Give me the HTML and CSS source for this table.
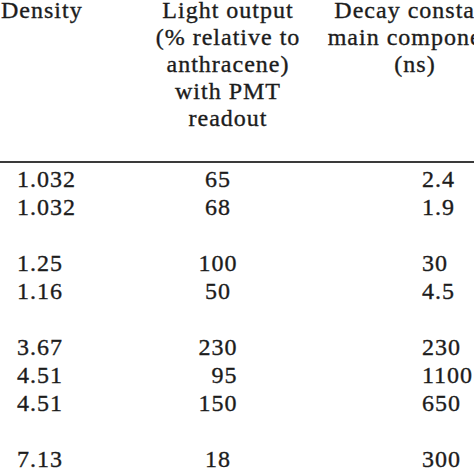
FILE: index.html
```html
<!DOCTYPE html>
<html>
<head>
<meta charset="utf-8">
<link rel="stylesheet" href="styles.css">
</head>
<body>
<div class="sheet">
  <div class="head">
    <div class="h h1">Density</div>
    <div class="h h2">Light output<br>(% relative to<br>anthracene)<br>with PMT<br>readout</div>
    <div class="h h3">Decay constant<br>main component<br>(ns)</div>
  </div>
  <div class="rule"></div>
  <div class="body">
    <div class="row"><span class="c1">1.032</span><span class="c2">65</span><span class="c3">2.4</span></div>
    <div class="row"><span class="c1">1.032</span><span class="c2">68</span><span class="c3">1.9</span></div>
    <div class="row gap"><span class="c1">1.25</span><span class="c2">100</span><span class="c3">30</span></div>
    <div class="row"><span class="c1">1.16</span><span class="c2">50</span><span class="c3">4.5</span></div>
    <div class="row gap"><span class="c1">3.67</span><span class="c2">230</span><span class="c3">230</span></div>
    <div class="row"><span class="c1">4.51</span><span class="c2">&#8199;95</span><span class="c3">1100</span></div>
    <div class="row"><span class="c1">4.51</span><span class="c2">150</span><span class="c3">650</span></div>
    <div class="row gap"><span class="c1">7.13</span><span class="c2">18</span><span class="c3">300</span></div>
  </div>
</div>
</body>
</html>
```
FILE: styles.css
```css
html, body {
  margin: 0;
  padding: 0;
  background: #ffffff;
}
body {
  width: 474px;
  height: 474px;
  overflow: hidden;
}
.sheet {
  width: 560px;
  font-family: "Liberation Serif", "Times New Roman", serif;
  font-size: 24px;
  letter-spacing: 1px;
  color: #1c1c1c;
  -webkit-text-stroke: 0.35px #1c1c1c;
  white-space: nowrap;
}
.head {
  display: grid;
  grid-template-columns: 148px 160px 214px;
  line-height: 27px;
  margin-top: -3px;
}
.h1 {
  padding-left: 1px;
}
.h2 {
  text-align: center;
}
.h3 {
  text-align: center;
}
.rule {
  margin-top: 29px;
  width: 474px;
  height: 0;
  border-top: 2px solid #3a3a3a;
}
.body {
  margin-top: 2px;
}
.row {
  display: grid;
  grid-template-columns: 158px 120px 274px;
  line-height: 28px;
}
.row.gap {
  margin-top: 28px;
}
.c1 {
  padding-left: 17px;
}
.c2 {
  text-align: center;
}
.c3 {
  padding-left: 144px;
}
```
